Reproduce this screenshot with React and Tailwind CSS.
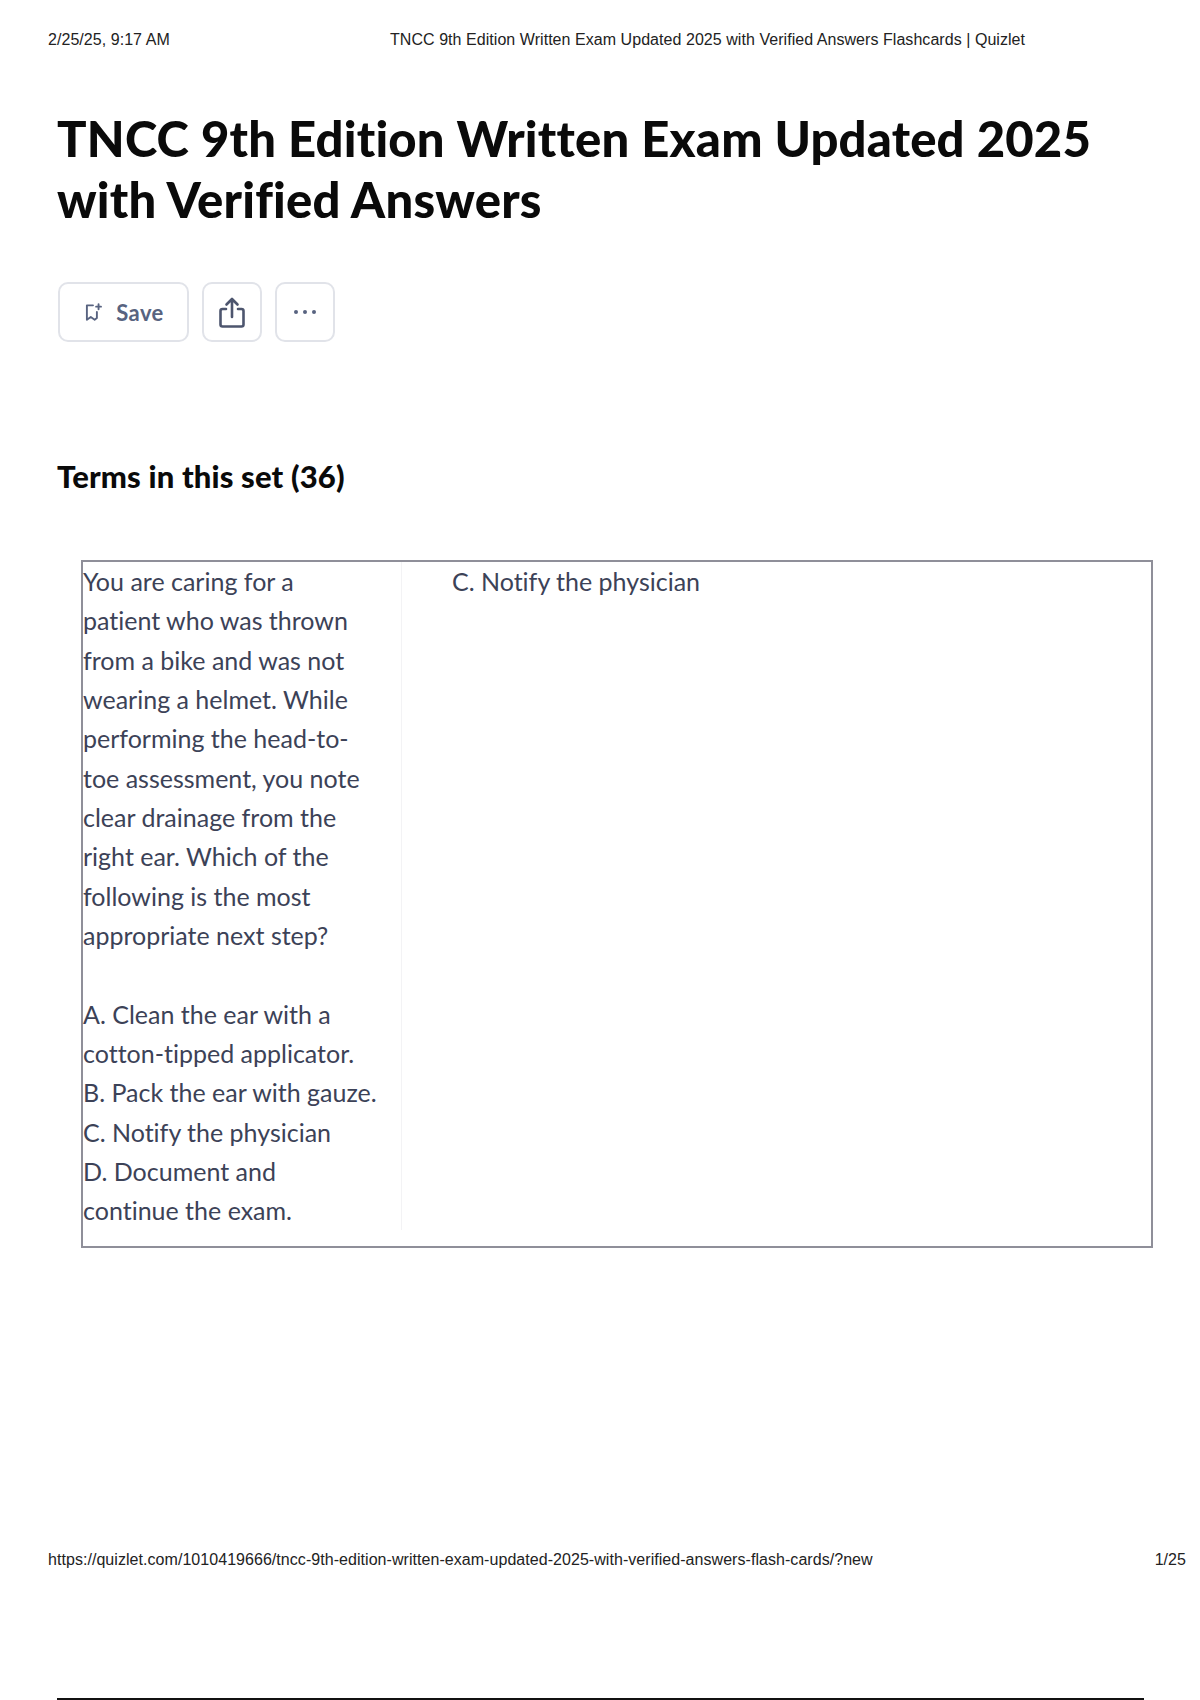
import React from "react";

const Q = ["You are caring for a","patient who was thrown","from a bike and was not","wearing a helmet. While","performing the head-to-","toe assessment, you note","clear drainage from the","right ear. Which of the","following is the most","appropriate next step?","\u00a0","A. Clean the ear with a","cotton-tipped applicator.","B. Pack the ear with gauze.","C. Notify the physician","D. Document and","continue the exam."];

function SaveIcon() {
  return (
    <svg width="20" height="20" viewBox="0 0 18 18" fill="none" stroke="#586380" strokeWidth="1.7" strokeLinejoin="round" strokeLinecap="round">
      <path d="M9 3H3.500v13l3.500-2.500L10.500 16l2-1.500V9" />
      <path d="M14 2v4.500M11.800 4.200h4.400" />
    </svg>
  );
}

function ShareIcon() {
  return (
    <svg width="30" height="34" viewBox="0 0 30 34" fill="none" stroke="#4d556e" strokeWidth="2.6" strokeLinejoin="round" strokeLinecap="round" className="mt-[2px]">
      <path d="M9 13H5.500A2 2 0 0 0 3.500 15v13.500a2 2 0 0 0 2 2h19a2 2 0 0 0 2-2V15a2 2 0 0 0-2-2H21" />
      <path d="M15 21V3M9.500 8.500 15 3l5.500 5.500" />
    </svg>
  );
}

export default function App() {
  return (
    <div className="w-[1200px] h-[1700px] bg-white flex flex-col overflow-hidden font-['Lato',sans-serif] [font-variant-ligatures:none]">
      <header className="h-[24px] mt-[28px] flex items-center font-['Liberation_Sans',sans-serif] text-[16px] tracking-[0.05px] text-[#222] pl-[48px]">
        <span className="w-[342px]">2/25/25, 9:17 AM</span>
        <span>TNCC 9th Edition Written Exam Updated 2025 with Verified Answers Flashcards | Quizlet</span>
      </header>

      <h1 className="ml-[57px] mt-[56px] text-[49px] leading-[60.500px] font-black tracking-[0.2px] text-[#0a0a0a]">
        TNCC 9th Edition Written Exam Updated 2025<br />with Verified Answers
      </h1>

      <div className="ml-[58px] mt-[53px] flex gap-[13px]">
        <div className="w-[131px] h-[60px] rounded-[10px] border-[2.500px] border-[#e1e3e9] flex items-center justify-center gap-[13px] text-[#586380] text-[22px] font-bold">
          <SaveIcon />
          <span className="tracking-[0.4px]">Save</span>
        </div>
        <div className="w-[60px] h-[60px] rounded-[10px] border-[2.500px] border-[#e1e3e9] flex items-center justify-center"><ShareIcon /></div>
        <div className="w-[60px] h-[60px] rounded-[10px] border-[2.500px] border-[#e1e3e9] flex items-center justify-center gap-[5px]">
          <span className="w-[4px] h-[4px] rounded-full bg-[#586380]"></span>
          <span className="w-[4px] h-[4px] rounded-full bg-[#586380]"></span>
          <span className="w-[4px] h-[4px] rounded-full bg-[#586380]"></span>
        </div>
      </div>

      <h2 className="ml-[57px] mt-[116px] text-[31px] leading-[36px] font-black tracking-[0.15px] text-[#0a0a0a]">Terms in this set (36)</h2>

      <div className="ml-[81px] mt-[66px] w-[1072px] h-[688px] border-2 border-[#8f8f99] flex text-[25px] leading-[39.330px] text-[#3c4257]">
        <div className="w-[319px] h-[668px] border-r border-[#f3f3f5]">
          {Q.map((l, i) => <div key={i}>{l}</div>)}
        </div>
        <div className="pl-[50px]">C. Notify the physician</div>
      </div>

      <footer className="mt-[300px] h-[24px] flex items-center justify-between font-['Liberation_Sans',sans-serif] text-[16px] tracking-[0.05px] text-[#222] pl-[48px] pr-[14px]">
        <span>https://quizlet.com/1010419666/tncc-9th-edition-written-exam-updated-2025-with-verified-answers-flash-cards/?new</span>
        <span>1/25</span>
      </footer>

      <div className="ml-[57px] mt-[126px] w-[1087px] h-[2px] bg-[#111]"></div>
    </div>
  );
}
